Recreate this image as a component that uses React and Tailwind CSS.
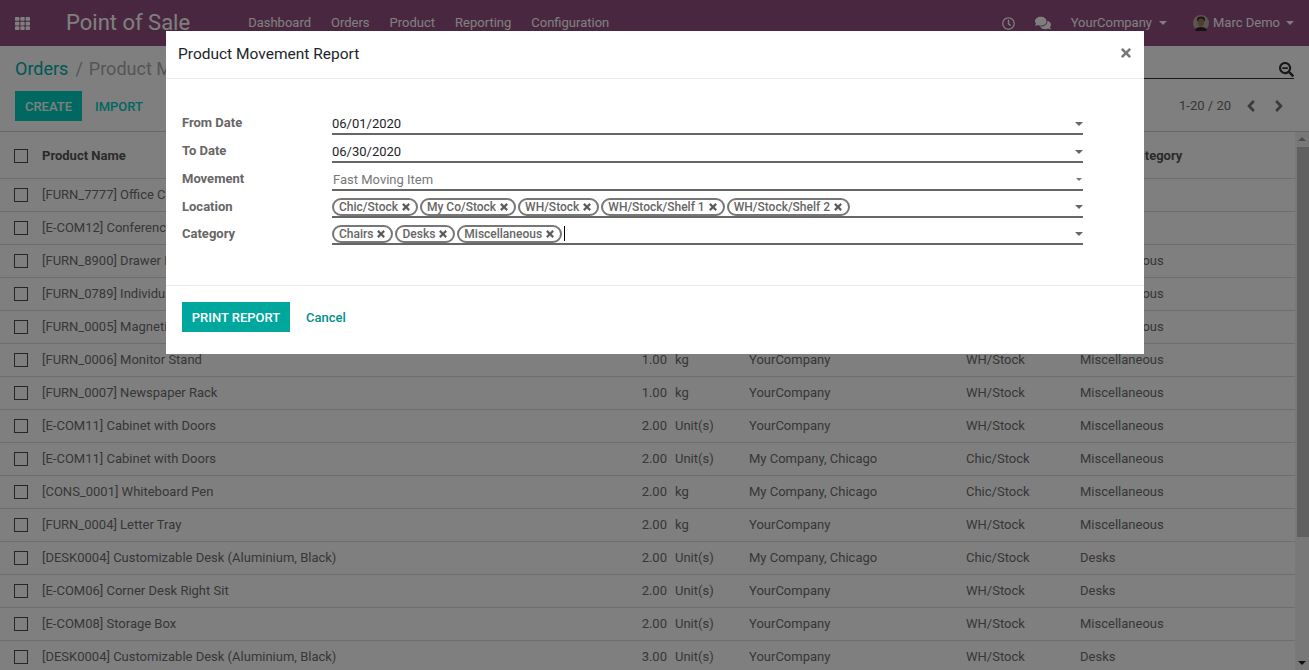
import { FaTh, FaRegClock, FaComments, FaSearchMinus, FaAngleLeft, FaAngleRight, FaTimes } from "react-icons/fa";

const rows = [
  ["[FURN_7777] Office Chair", "1.00", "Unit(s)", "YourCompany", "WH/Stock", "Chairs"],
  ["[E-COM12] Conference Chair", "1.00", "Unit(s)", "YourCompany", "WH/Stock", "Chairs"],
  ["[FURN_8900] Drawer Black", "1.00", "Unit(s)", "YourCompany", "WH/Stock", "Miscellaneous"],
  ["[FURN_0789] Individual Workplace", "1.00", "Unit(s)", "YourCompany", "WH/Stock", "Miscellaneous"],
  ["[FURN_0005] Magnetic Board", "1.00", "Unit(s)", "YourCompany", "WH/Stock", "Miscellaneous"],
  ["[FURN_0006] Monitor Stand", "1.00", "kg", "YourCompany", "WH/Stock", "Miscellaneous"],
  ["[FURN_0007] Newspaper Rack", "1.00", "kg", "YourCompany", "WH/Stock", "Miscellaneous"],
  ["[E-COM11] Cabinet with Doors", "2.00", "Unit(s)", "YourCompany", "WH/Stock", "Miscellaneous"],
  ["[E-COM11] Cabinet with Doors", "2.00", "Unit(s)", "My Company, Chicago", "Chic/Stock", "Miscellaneous"],
  ["[CONS_0001] Whiteboard Pen", "2.00", "kg", "My Company, Chicago", "Chic/Stock", "Miscellaneous"],
  ["[FURN_0004] Letter Tray", "2.00", "kg", "YourCompany", "WH/Stock", "Miscellaneous"],
  ["[DESK0004] Customizable Desk (Aluminium, Black)", "2.00", "Unit(s)", "My Company, Chicago", "Chic/Stock", "Desks"],
  ["[E-COM06] Corner Desk Right Sit", "2.00", "Unit(s)", "YourCompany", "WH/Stock", "Desks"],
  ["[E-COM08] Storage Box", "2.00", "Unit(s)", "YourCompany", "WH/Stock", "Miscellaneous"],
  ["[DESK0004] Customizable Desk (Aluminium, Black)", "3.00", "Unit(s)", "YourCompany", "WH/Stock", "Desks"],
];

const cols = "grid grid-cols-[42px_586px_47px_74px_217px_114px_1fr] items-center";

const Caret = ({ w = 8, h = 4, className = "" }) => (
  <svg className={className} width={w} height={h} viewBox="0 0 8 4" preserveAspectRatio="none" fill="currentColor">
    <polygon points="0,0 8,0 4,4" />
  </svg>
);

const Checkbox = () => <span className="block w-[14px] h-[14px] ml-[14px] border border-[#4c4c4c] bg-white" />;

const Chip = ({ label }) => (
  <span className="flex items-center gap-[3px] h-[18px] pl-[5px] pr-[5px] border-2 border-[#777] rounded-full text-[12px] font-medium text-[#666] whitespace-nowrap">
    {label}
    <FaTimes className="text-[10px] text-[#555] stroke-current stroke-[30]" />
  </span>
);

const Field = ({ label, children, small, h = "h-[28px]" }) => (
  <div className={`flex ${h}`}>
    <div className="w-[150px] pt-[7px] text-[13px] leading-[18px] font-bold text-[#666]">{label}</div>
    <div className="relative flex-1 flex items-end gap-[2px] border-b-2 border-[#666]">
      {children}
      {small ? (
        <Caret w={6} h={3} className="absolute right-[1px] bottom-[8px] text-[#777]" />
      ) : (
        <Caret className="absolute right-0 bottom-[7px] text-[#666]" />
      )}
    </div>
  </div>
);

export default function App() {
  return (
    <div className="relative w-[1309px] h-[670px] overflow-hidden bg-white font-['Roboto',sans-serif] text-[13px] text-[#6e6e6e]">
      <nav className="h-[46px] bg-[#954f80] flex items-center text-white">
        <FaTh className="ml-[15px] text-[15px]" />
        <span className="ml-[36px] text-[22px] leading-none">Point of Sale</span>
        <div className="ml-[58px] flex gap-[20px]">
          <span>Dashboard</span>
          <span>Orders</span>
          <span>Product</span>
          <span>Reporting</span>
          <span>Configuration</span>
        </div>
        <div className="ml-auto flex items-center">
          <FaRegClock className="text-[13px]" />
          <FaComments className="ml-[20px] text-[16px]" />
          <span className="ml-[20px]">YourCompany</span>
          <Caret className="ml-[7px]" />
          <svg className="ml-[26px]" width="16" height="16" viewBox="0 0 16 16">
            <circle cx="8" cy="8" r="8" fill="#b5aca2" />
            <ellipse cx="8" cy="4.5" rx="4" ry="3" fill="#3a2e28" />
            <ellipse cx="8" cy="7.5" rx="3" ry="4" fill="#a07c62" />
            <path d="M2 15c1-4 11-4 12 0a8 8 0 0 1-12 0z" fill="#2c2420" />
          </svg>
          <span className="ml-[4px]">Marc Demo</span>
          <Caret className="ml-[6px] mr-[15px]" />
        </div>
      </nav>

      <div className="h-[86px] border-b border-[#ccc] px-[15px] relative">
        <div className="pt-[10px] text-[18px] leading-[26px]">
          <span className="text-[#00b0a8]">Orders</span>
          <span className="ml-[7px] mr-[6px] text-[#aaa]">/</span>
          <span className="text-[#aaa]">Product Movement</span>
        </div>
        <div className="mt-[9px] flex items-center">
          <button className="w-[67px] h-[30px] pt-[1px] bg-[#00d0c0] text-white font-medium text-[13px]">CREATE</button>
          <button className="ml-[13px] pt-[1px] text-[#00d0c4] font-medium text-[13px]">IMPORT</button>
          <span className="ml-auto text-[13px]">1-20 / 20</span>
          <FaAngleLeft className="ml-[11px] text-[18px] text-[#777]" />
          <FaAngleRight className="ml-[10px] mr-[6px] text-[18px] text-[#777]" />
        </div>
        <div className="absolute right-[15px] top-[11px] w-[200px] h-[22px] pt-[3px] border-b border-[#333] flex justify-end items-center">
          <FaSearchMinus className="text-[15px] text-[#333]" />
        </div>
      </div>

      <div className="flex h-[538px]">
        <div className="flex-1 min-w-0">
          <div className={`${cols} h-[47px] pt-[2px] border-b border-[#ddd] font-bold text-[#555]`}>
            <Checkbox />
            <span>Product Name</span>
            <span />
            <span />
            <span />
            <span />
            <span>Product Category</span>
          </div>
          {rows.map((r, i) => (
            <div key={i} className={`${cols} h-[33px] border-b border-[#ddd]`}>
              <Checkbox />
              <span className="whitespace-nowrap">{r[0]}</span>
              <span className="text-right pr-[8px] -ml-[20px]">{r[1]}</span>
              <span>{r[2]}</span>
              <span>{r[3]}</span>
              <span>{r[4]}</span>
              <span>{r[5]}</span>
            </div>
          ))}
        </div>
        <div className="relative w-[14px] shrink-0 bg-[#f1f1f1] pl-[2px] pt-[15px]">
          <Caret className="absolute left-[3px] top-[5px] rotate-180 text-[#999]" />
          <div className="w-full h-[390px] bg-[#c1c1c1]" />
          <Caret className="absolute left-[3px] bottom-[5px] text-[#222]" />
        </div>
      </div>

      <div className="absolute inset-0 bg-black/50">
        <div className="mt-[31px] ml-[166px] w-[978px] bg-white flex flex-col">
          <div className="h-[48px] border-b border-[#e9ecef] flex items-center pl-[12px] pr-[11px]">
            <span className="text-[15.5px] text-[#212529]">Product Movement Report</span>
            <FaTimes className="ml-auto -mt-[3px] text-[14px] text-[#777]" />
          </div>
          <div className="h-[207px] pl-[16px] pr-[61px] pt-[28px] border-b border-[#e9ecef]">
            <Field label="From Date"><span className="text-[13px] leading-[18px] text-[#212529]">06/01/2020</span></Field>
            <Field label="To Date"><span className="text-[13px] leading-[18px] text-[#212529]">06/30/2020</span></Field>
            <Field label="Movement" small><span className="pl-[1px] text-[13px] leading-[18px] text-[#777]">Fast Moving Item</span></Field>
            <Field label="Location" h="h-[27px]">
              <Chip label="Chic/Stock" />
              <Chip label="My Co/Stock" />
              <Chip label="WH/Stock" />
              <Chip label="WH/Stock/Shelf 1" />
              <Chip label="WH/Stock/Shelf 2" />
            </Field>
            <Field label="Category" h="h-[27px]">
              <Chip label="Chairs" />
              <Chip label="Desks" />
              <Chip label="Miscellaneous" />
              <span className="w-px h-[15px] bg-black mb-[2px]" />
            </Field>
          </div>
          <div className="h-[68px] pl-[16px] pt-[16px] flex items-start">
            <button className="w-[108px] h-[30px] pt-[1px] bg-[#00a79d] text-white font-medium text-[13px]">PRINT REPORT</button>
            <button className="ml-[16px] h-[30px] pt-[1px] text-[#00908a] font-medium text-[13px]">Cancel</button>
          </div>
        </div>
      </div>
    </div>
  );
}
